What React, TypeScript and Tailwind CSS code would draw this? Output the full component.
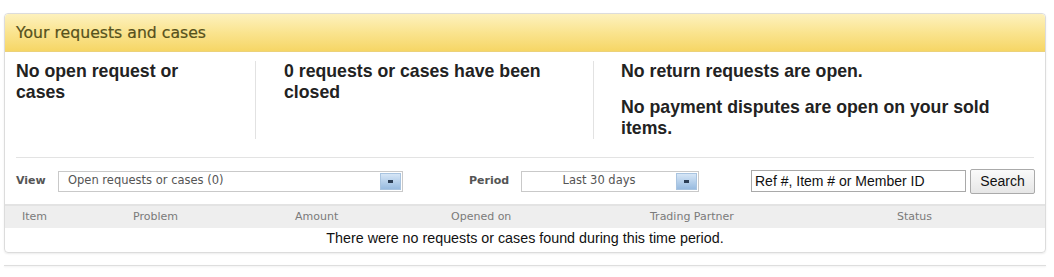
const verdana = "font-['DejaVu_Sans',Verdana,sans-serif]";
const arial = "font-['Liberation_Sans',Arial,sans-serif]";

function SelectBox({ label, width, center }: { label: string; width: string; center?: boolean }) {
  return (
    <div className={`flex h-[21px] items-center border border-[#c9c9c9] bg-white ${width}`}>
      <span className={`flex-1 truncate text-[11.5px] text-[#555] ${verdana} ${center ? 'text-center' : 'pl-[9px]'}`}>
        {label}
      </span>
      <span className="mr-[1px] flex h-[17px] w-[21px] items-center justify-center border border-[#a9c4e0] bg-gradient-to-b from-[#d6e6f6] to-[#98bbe0]">
        <span className="h-[3px] w-[5px] bg-[#2c3e55]" />
      </span>
    </div>
  );
}

const columns = [
  { label: 'Item', cls: 'pl-[17px]' },
  { label: 'Problem', cls: 'pl-0' },
  { label: 'Amount', cls: 'pl-0' },
  { label: 'Opened on', cls: 'pl-0' },
  { label: 'Trading Partner', cls: 'pl-0' },
  { label: 'Status', cls: 'pl-0' },
];

export default function App() {
  return (
    <div className="h-[277px] w-[1054px] bg-white pt-[13px] pl-[4px]">
      <div className="w-[1042px] rounded-[4px] border border-[#dcdcdc] shadow-[0_1px_2px_rgba(0,0,0,0.08)]">
        {/* Header */}
        <div className="flex h-[38px] items-center rounded-t-[4px] border-b border-[#ecd27a] bg-gradient-to-b from-[#fdf1bd] via-[#fae48f] to-[#f6d665] pl-[11px]">
          <h2 className={`text-[15.7px] text-[#56511c] [-webkit-text-stroke:0.2px_#56511c] ${verdana}`}>Your requests and cases</h2>
        </div>

        {/* Summary */}
        <div className={`flex pt-[9px] text-[17.7px] font-bold leading-[21px] text-[#222] ${arial}`}>
          <div className="h-[78px] w-[250px] pl-[11px]">
            No open request or
            <br />
            cases
          </div>
          <div className="h-[78px] w-[338px] border-l border-[#e2e2e2] pl-[28px]">
            0 requests or cases have been
            <br />
            closed
          </div>
          <div className="flex-1 border-l border-[#e2e2e2] pl-[27px]">
            <p>No return requests are open.</p>
            <p className="mt-[15px]">
              No payment disputes are open on your sold
              <br />
              items.
            </p>
          </div>
        </div>

        <div className="mx-[11px] mt-[18px] h-[1px] bg-[#e3e3e3]" />

        {/* Filters */}
        <div className="flex h-[46px] items-center pl-[11px]">
          <span className={`w-[42px] text-[11px] font-bold text-[#555] ${verdana}`}>View</span>
          <SelectBox label="Open requests or cases (0)" width="w-[345px]" />
          <span className={`ml-[66px] w-[52px] text-[11px] font-bold text-[#555] ${verdana}`}>Period</span>
          <SelectBox label="Last 30 days" width="w-[178px]" center />
          <input
            readOnly
            value="Ref #, Item # or Member ID"
            className={`ml-[52px] h-[22px] w-[215px] border border-[#a9a9a9] px-[3px] text-[14px] text-[#111] outline-none ${arial}`}
          />
          <button
            className={`ml-[4px] h-[25px] w-[65px] rounded-[2px] border border-[#aaa] bg-gradient-to-b from-[#fafafa] to-[#e6e6e6] text-[14px] text-[#111] ${arial}`}
          >
            Search
          </button>
        </div>

        {/* Table */}
        <div className={`grid h-[24px] grid-cols-[128px_162px_156px_199px_247px_1fr] items-center border-t-[2px] border-[#e3e3e3] bg-[#eeeeee] text-[11px] text-[#7a7a7a] ${verdana}`}>
          {columns.map((c) => (
            <span key={c.label} className={c.cls}>
              {c.label}
            </span>
          ))}
        </div>
        <div className={`flex h-[24px] items-center justify-center pb-[2px] text-[14.3px] text-[#111] ${arial}`}>
          There were no requests or cases found during this time period.
        </div>
      </div>

      <div className="mt-[12px] h-[1px] w-[1042px] bg-[#dedede] shadow-[0_1px_2px_rgba(0,0,0,0.08)]" />
    </div>
  );
}
